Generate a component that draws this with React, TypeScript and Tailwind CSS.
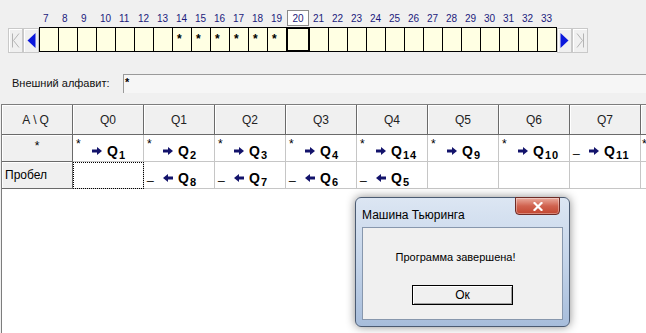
import React from 'react';

type Move = { sym: '*' | '_'; dir: 'r' | 'l'; q: string };

const tape = Array.from({ length: 27 }, (_, i) => i + 7);
const starred = [14, 15, 16, 17, 18, 19];
const current = 20;

const states = ['Q0', 'Q1', 'Q2', 'Q3', 'Q4', 'Q5', 'Q6', 'Q7', ''];

const starRow: (Move | null)[] = [
  { sym: '*', dir: 'r', q: '1' },
  { sym: '*', dir: 'r', q: '2' },
  { sym: '*', dir: 'r', q: '3' },
  { sym: '*', dir: 'r', q: '4' },
  { sym: '*', dir: 'r', q: '14' },
  { sym: '*', dir: 'r', q: '9' },
  { sym: '*', dir: 'r', q: '10' },
  { sym: '_', dir: 'r', q: '11' },
  null,
];

const blankRow: (Move | null)[] = [
  null,
  { sym: '_', dir: 'l', q: '8' },
  { sym: '_', dir: 'l', q: '7' },
  { sym: '_', dir: 'l', q: '6' },
  { sym: '_', dir: 'l', q: '5' },
  null,
  null,
  null,
  null,
];

function Arrow({ left }: { left?: boolean }) {
  return (
    <svg width="10" height="8" viewBox="0 0 10 8" className={left ? 'rotate-180' : ''}>
      <path d="M0 2.5H5V0L10 4L5 8V5.5H0Z" fill="#13136b" />
    </svg>
  );
}

function MoveCell({ m }: { m: Move | null }) {
  if (!m) return null;
  return (
    <div className="flex items-center h-full pl-[3px]">
      <span className={`w-[16px] text-[12px] leading-none ${m.sym === '*' ? 'self-start mt-[3px]' : ''}`}>
        {m.sym}
      </span>
      <div className="flex items-center mt-[6px]">
        <Arrow left={m.dir === 'l'} />
        <span className="ml-[5px] font-bold leading-none whitespace-nowrap">
          <span className="text-[14px]">Q</span>
          <sub className="ml-[1px] text-[11px] tracking-[1px]">{m.q}</sub>
        </span>
      </div>
    </div>
  );
}

function TapeButton({ children }: { children: React.ReactNode }) {
  return (
    <div className="mt-[1px] h-[25px] flex items-center justify-center bg-[#f0f0f0] border border-[#c9c9c9] shadow-[inset_1px_1px_0_#ffffff]">
      {children}
    </div>
  );
}

const headCell = 'bg-[#f0f0f0] border-r border-b border-[#6a6a6a] shadow-[inset_1px_1px_0_#ffffff]';
const dataCell = 'bg-white border-r border-b border-[#c6c6c6]';

export default function App() {
  return (
    <div className="relative w-[646px] h-[333px] overflow-hidden bg-[#f0f0f0] flex flex-col font-['Liberation_Sans',Arial,sans-serif] text-black">
      {/* номера ячеек */}
      <div className="flex h-[16px] mt-[10px] pl-[39px] text-[10px] text-[#1b1b7c]">
        {tape.map((n) =>
          n === current ? (
            <div key={n} className="w-[23px] pl-[1px]">
              <div className="h-[16px] flex items-center justify-center bg-white border border-[#8a8a8a]">{n}</div>
            </div>
          ) : (
            <div key={n} className="w-[19px] pl-[4px] flex items-center">
              {n}
            </div>
          )
        )}
      </div>

      {/* лента */}
      <div className="flex mt-[1px] pl-[8px]">
        <div className="w-[15px]">
          <TapeButton>
            <svg width="9" height="15" viewBox="0 0 9 15">
              <path d="M1.5 0.5V14.5M8 0.5L2.5 7.5L8 14.5" stroke="#b4b4b4" fill="none" strokeWidth="1" />
            </svg>
          </TapeButton>
        </div>
        <div className="w-[16px]">
          <TapeButton>
            <svg width="9" height="15" viewBox="0 0 9 15">
              <path d="M8.5 0V15L0.5 7.5Z" fill="#0a17dc" />
            </svg>
          </TapeButton>
        </div>
        <div className="flex h-[25px] bg-[#ffffe3]">
          {tape.map((n, i) =>
            n === current ? (
              <div key={n} className="w-[23px] h-full border-l-2 border-y-2 border-r border-black" />
            ) : (
              <div
                key={n}
                className={`w-[19px] h-full border-l border-y border-black pl-[4px] pt-[5px] text-[12px] font-bold leading-none ${
                  i === tape.length - 1 ? 'w-[20px] border-r' : ''
                }`}
              >
                {starred.includes(n) ? '*' : ''}
              </div>
            )
          )}
        </div>
        <div className="w-[15px]">
          <TapeButton>
            <svg width="9" height="15" viewBox="0 0 9 15">
              <path d="M0.5 0V15L8.5 7.5Z" fill="#0a17dc" />
            </svg>
          </TapeButton>
        </div>
        <div className="w-[16px]">
          <TapeButton>
            <svg width="9" height="15" viewBox="0 0 9 15">
              <path d="M1 0.5L6.5 7.5L1 14.5M7.5 0.5V14.5" stroke="#b4b4b4" fill="none" strokeWidth="1" />
            </svg>
          </TapeButton>
        </div>
      </div>

      {/* внешний алфавит */}
      <div className="flex items-center h-[19px] mt-[21px]">
        <span className="w-[123px] pl-[12px] text-[11px] text-[#111]">Внешний алфавит:</span>
        <div className="flex-1 h-full bg-[#f6f6f6] border-l border-t border-[#9a9a9a] pl-[1px] pt-[2px] text-[11px] font-bold leading-none">
          *
        </div>
      </div>

      {/* таблица переходов */}
      <div className="flex-1 mt-[11px] ml-[1px] bg-white border-l border-t border-[#7d7d7d]">
        <div className="grid grid-cols-[71px_repeat(9,71px)] grid-rows-[30px_27px_27px] text-[12px]">
          <div className={`${headCell} flex items-center justify-center tracking-[3px] text-[#222]`}>A\Q</div>
          {states.map((s, i) => (
            <div key={i} className={`${headCell} flex items-center justify-center text-[#222]`}>
              {s}
            </div>
          ))}

          <div className={`${headCell} flex items-center justify-center pb-[4px]`}>*</div>
          {starRow.map((m, i) => (
            <div key={i} className={dataCell}>
              {i === 8 ? <div className="pl-[1px] pt-[3px] leading-none">*</div> : <MoveCell m={m} />}
            </div>
          ))}

          <div className={`${headCell} flex items-center pl-[3px]`}>Пробел</div>
          {blankRow.map((m, i) => (
            <div key={i} className={`${dataCell} ${i === 0 ? 'outline-1 outline-dotted outline-black -outline-offset-1' : ''}`}>
              <MoveCell m={m} />
            </div>
          ))}
        </div>
      </div>

      {/* окно сообщения */}
      <div className="absolute left-[355px] top-[197px] w-[215px] h-[130px] flex flex-col px-[6px] pb-[6px] rounded-[6px] border border-[#4b5b72] bg-gradient-to-b from-[#dce6f3] via-[#c4d4e9] to-[#a7bddb] shadow-[0_0_10px_rgba(0,0,0,0.45)]">
        <div className="relative h-[29px]">
          <div className="pt-[8px] text-[12px] text-black">Машина Тьюринга</div>
          <div className="absolute right-[3px] top-[-1px] w-[45px] h-[18px] flex items-center justify-center rounded-b-[4px] border border-[#6d2b26] bg-gradient-to-b from-[#e9aa9d] via-[#d0624f] to-[#c2452f] shadow-[inset_0_0_0_1px_rgba(255,255,255,0.35)]">
            <svg width="10" height="9" viewBox="0 0 10 9">
              <path d="M1.5 1L8.5 8M8.5 1L1.5 8" stroke="#ffffff" strokeWidth="2.2" strokeLinecap="square" />
            </svg>
          </div>
        </div>
        <div className="flex-1 flex flex-col items-center bg-[#f0f0f0] border border-[#8797ad]">
          <div className="mt-[22px] pr-[14px] text-[11px] leading-[14px]">Программа завершена!</div>
          <div className="mt-[21px] w-[101px] h-[20px] flex items-center justify-center border border-black bg-[#f0f0f0] shadow-[inset_1px_1px_0_#ffffff,inset_-1px_-1px_0_#a0a0a0] text-[12px]">
            Ок
          </div>
        </div>
      </div>
    </div>
  );
}
